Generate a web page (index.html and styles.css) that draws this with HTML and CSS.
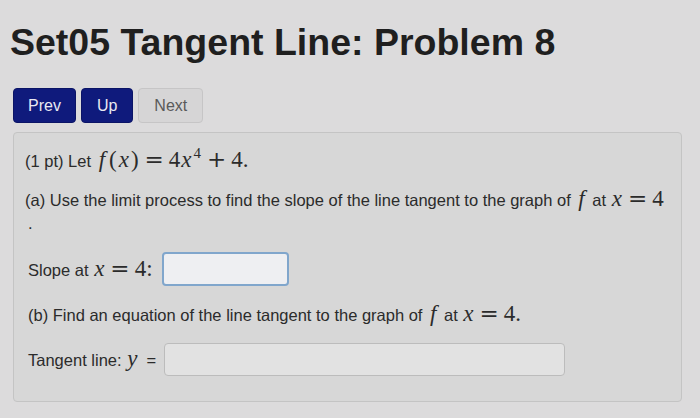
FILE: index.html
```html
<!DOCTYPE html>
<html>
<head>
<meta charset="utf-8">
<link rel="stylesheet" href="styles.css">
</head>
<body>
<div class="page">
  <h1 class="title">Set05 Tangent Line: Problem 8</h1>
  <div class="nav">
    <span class="btn btn-primary">Prev</span>
    <span class="btn btn-primary">Up</span>
    <span class="btn btn-disabled">Next</span>
  </div>
  <div class="problem">
    <div class="line l1"><span class="txt">(1 pt) Let <span class="math"><span class="mi f">f</span><span class="mp">(</span><span class="mi x">x</span><span class="mp">)</span><span class="mo rel">=</span><span class="mn">4</span><span class="mi x">x</span><sup class="sup">4</sup><span class="mo bin">+</span><span class="mn">4</span>.</span></span></div>
    <div class="line l2"><span class="txt">(a) Use the limit process to find the slope of the line tangent to the graph of <span class="math"><span class="mi f">f</span></span> at <span class="math"><span class="mi x">x</span><span class="mo rel">=</span><span class="mn">4</span></span></span></div>
    <div class="line l3"><span class="txt">.</span></div>
    <div class="line l4"><span class="txt">Slope at <span class="math"><span class="mi x">x</span><span class="mo rel">=</span><span class="mn">4</span>:</span></span><span class="input input-focus"></span></div>
    <div class="line l5"><span class="txt">(b) Find an equation of the line tangent to the graph of <span class="math"><span class="mi f">f</span></span> at <span class="math"><span class="mi x">x</span><span class="mo rel">=</span><span class="mn">4</span>.</span></span></div>
    <div class="line l6"><span class="txt">Tangent line: <span class="math"><span class="mi y">y</span></span><span class="eq">=</span></span><span class="input input-wide"></span></div>
  </div>
</div>
</body>
</html>
```

FILE: styles.css
```css
html, body {
  margin: 0;
  padding: 0;
}
body {
  background: #dcdbdc;
  font-family: "Liberation Sans", Arial, sans-serif;
  color: #2b2b2b;
  width: 700px;
  height: 418px;
  overflow: hidden;
}
.page {
  padding: 22px 0 0 13px;
}
.title {
  margin: 0 0 0 -3px;
  font-size: 37.5px;
  line-height: 41px;
  font-weight: bold;
  color: #1f1f1f;
}
.nav {
  display: flex;
  gap: 5px;
  margin-top: 25px;
}
.btn {
  display: inline-flex;
  align-items: center;
  justify-content: center;
  box-sizing: border-box;
  height: 35px;
  padding: 0 14px;
  border-radius: 4px;
  font-size: 16px;
}
.btn-primary {
  background: #0f1a7c;
  color: #e9e9f2;
  border: 1px solid #0b1466;
}
.btn-primary + .btn-primary {
  padding: 0 15px;
}
.btn-disabled {
  background: #d6d5d6;
  color: #5a5a5a;
  border: 1px solid #c6c5c6;
  padding: 0 15px;
}
.problem {
  margin-top: 9px;
  width: 669px;
  box-sizing: border-box;
  background: #d7d7d7;
  border: 1px solid #c4c4c4;
  border-radius: 4px;
  padding: 15px 0 25px 11px;
  display: flex;
  flex-direction: column;
}
.line {
  display: flex;
  align-items: center;
  font-size: 16.5px;
  white-space: nowrap;
}
.txt {
  line-height: 24px;
}
.l1 { height: 24px; }
.l2 { height: 24px; margin-top: 15px; }
.l3 { height: 20px; margin-top: 2px; padding-left: 3px; }
.l4 { height: 34px; margin-top: 19px; padding-left: 3px; }
.l5 { height: 24px; margin-top: 16px; padding-left: 3px; }
.l6 { height: 33px; margin-top: 17px; padding-left: 3px; }
.math {
  font-family: "Liberation Serif", "DejaVu Serif", serif;
  font-size: 23px;
  color: #2b2b2b;
}
.mi {
  font-style: italic;
}
.mi.f {
  margin-left: 3px;
  margin-right: 3px;
}
.mi.x {
  margin: 0 1px;
}
.mi.y {
  margin: 0 1px;
}
.mp {
  margin: 0 1px;
}
.mo {
  font-family: "DejaVu Serif", serif;
  font-size: 23px;
}
.rel {
  margin: 0 5px 0 5px;
}
.bin {
  margin: 0 5px 0 6px;
}
.sup {
  font-size: 15px;
  vertical-align: 9px;
  line-height: 0;
  margin-left: 1px;
}
.eq {
  margin-left: 8px;
}
.input {
  display: inline-block;
  box-sizing: border-box;
  border-radius: 4px;
}
.input-focus {
  width: 127px;
  height: 34px;
  margin-left: 9px;
  background: #eeeff2;
  border: 2px solid #80a6cc;
}
.input-wide {
  width: 401px;
  height: 33px;
  margin-left: 8px;
  background: #e2e2e2;
  border: 1px solid #bcbcbc;
}
```
